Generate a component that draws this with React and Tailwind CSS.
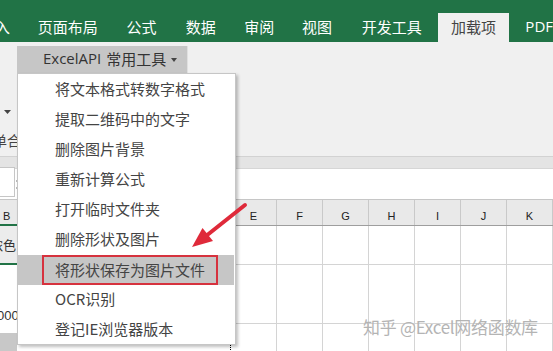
import React from "react";

const CJK = { fontFamily: '"Noto Sans CJK SC", "Noto Sans", sans-serif' };

const tabs = [
  { t: "页面布局", w: "w-[88px]" },
  { t: "公式", w: "w-[60px]" },
  { t: "数据", w: "w-[59px]" },
  { t: "审阅", w: "w-[58px]" },
  { t: "视图", w: "w-[58px]" },
  { t: "开发工具", w: "w-[92px]" },
];

const items = [
  "将文本格式转数字格式",
  "提取二维码中的文字",
  "删除图片背景",
  "重新计算公式",
  "打开临时文件夹",
  "删除形状及图片",
  "将形状保存为图片文件",
  "OCR识别",
  "登记IE浏览器版本",
];

const cols = ["E", "F", "G", "H", "I", "J", "K"];

export default function App() {
  return (
    <div
      className="relative w-[553px] h-[351px] overflow-hidden bg-white"
      style={CJK}
    >
      {/* Tab bar */}
      <div className="h-[42px] bg-[#217346] flex items-end text-[15px] text-white">
        <div className="w-[24px] h-[29px] flex items-center pb-[2px] overflow-hidden">
          <span className="-ml-[5px] leading-none">入</span>
        </div>
        {tabs.map((x) => (
          <div
            key={x.t}
            className={`${x.w} h-[29px] flex items-center justify-center pb-[2px] leading-none`}
          >
            {x.t}
          </div>
        ))}
        <div className="w-[72px] h-[29px] bg-[#f0f0f0] text-[#444] flex items-center justify-center pb-[2px] leading-none">
          加载项
        </div>
        <div className="h-[29px] flex items-center pl-[16px] pb-[2px] leading-none" style={{ fontFamily: '"Open Sans", sans-serif' }}>
          PDF
        </div>
      </div>

      {/* Ribbon */}
      <div className="h-[115px] bg-[#f0f0f0] border-b border-[#d2d2d2] flex">
        <div className="w-[17px] overflow-hidden flex flex-col">
          <div className="mt-[65px] h-[10px] flex items-center pl-[4px]">
            <svg width="7" height="4" viewBox="0 0 7 4">
              <path d="M0 0 L7 0 L3.5 4 Z" fill="#444" />
            </svg>
          </div>
          <div className="mt-[13px] h-[20px] flex items-center text-[14px] text-[#444] whitespace-nowrap">
            <span className="-ml-[7px] leading-none">单合</span>
          </div>
        </div>
        <div className="mt-[4px] h-[27px] w-[171px] bg-[#c6c6c6] flex items-center pl-[26px] pb-[2px] text-[15px] text-[#333] border-r border-[#e0e0e0] whitespace-nowrap">
          <span className="leading-none" style={{ fontFamily: '"Open Sans", "Noto Sans CJK SC", sans-serif' }}>
            ExcelAPI
          </span>
          <span className="leading-none ml-[5px]">常用工具</span>
          <svg className="ml-[5px] mt-[2px]" width="6" height="4" viewBox="0 0 6 4">
            <path d="M0 0 L6 0 L3 4 Z" fill="#444" />
          </svg>
        </div>
      </div>

      {/* band */}
      <div className="h-[12px] bg-[#e4e4e4] border-b border-[#d6d6d6]" />

      {/* formula bar */}
      <div className="h-[31px] bg-white border-b border-[#c6c6c6] flex">
        <div className="w-[15px] h-full border border-[#c6c6c6] border-l-0 -mt-[2px] bg-white" />
        <div className="w-[3px] flex flex-col items-center justify-center gap-[5px]">
          <div className="w-[2px] h-[2px] bg-[#bbb]" />
          <div className="w-[2px] h-[2px] bg-[#bbb]" />
        </div>
      </div>

      {/* column header */}
      <div className="h-[26px] flex bg-[#e9e9e9] border-b border-[#9e9e9e]" style={{ fontFamily: '"Liberation Sans", Arial, sans-serif' }}>
        <div className="w-[237px] relative flex items-end pb-[3px] pl-[3px] text-[11px] text-[#222]">
          <span className="leading-none">B</span>
          <div className="absolute left-0 bottom-[-1px] w-[60px] h-[2px] bg-[#217346]" />
        </div>
        {cols.map((c) => (
          <div
            key={c}
            className="w-[46px] shrink-0 border-r border-[#c9c9c9] flex items-end justify-center pb-[3px] text-[11px] text-[#222]"
          >
            <span className="leading-none">{c}</span>
          </div>
        ))}
      </div>

      {/* grid body */}
      <div className="flex">
        <div className="w-[236px] flex flex-col">
          <div className="h-[39px] w-[60px] bg-[#ececec] border-b-2 border-[#217346] flex items-center text-[13px] text-[#333] whitespace-nowrap overflow-hidden">
            <span className="-ml-[10px] leading-none">浓色</span>
          </div>
          <div className="h-[59px] flex items-end pb-[2px] text-[13px] text-[#333]" style={{ fontFamily: '"Liberation Sans", Arial, sans-serif' }}>
            <span className="-ml-[3px] leading-none">000</span>
          </div>
          <div className="h-[30px] pt-[9px]">
            <div className="w-[17px] h-full bg-[#c8c8c8]" />
          </div>
        </div>
        <div className="w-px border-l border-dotted border-black" />
        <div className="flex flex-col">
          {[39, 59, 40].map((h, r) => (
            <div key={r} className="flex" style={{ height: h }}>
              {cols.map((c) => (
                <div
                  key={c}
                  className="w-[46px] shrink-0 border-r border-b border-[#d4d4d4]"
                />
              ))}
            </div>
          ))}
        </div>
      </div>

      {/* dropdown menu */}
      <div className="absolute left-[17px] top-[73px] w-[219px] h-[272px] bg-white border border-[#c6c6c6] shadow-[2px_2px_3px_rgba(0,0,0,0.25)] pt-[1px] text-[15px] text-[#444]">
        {items.map((t, i) =>
          i === 6 ? (
            <div key={t} className="h-[30px] mr-[1px] bg-[#c6c6c6] flex">
              <div className="ml-[24px] w-[176px] h-full border-2 border-[#d6323e] flex items-center pl-[11px] pb-[2px] whitespace-nowrap">
                <span className="leading-none">{t}</span>
              </div>
            </div>
          ) : (
            <div
              key={t}
              className="h-[30px] flex items-center pl-[37px] pb-[3px] whitespace-nowrap"
            >
              <span className="leading-none">{t}</span>
            </div>
          )
        )}
      </div>

      {/* red arrow */}
      <svg
        className="absolute left-0 top-0 pointer-events-none"
        width="553"
        height="351"
        viewBox="0 0 553 351"
      >
        <line
          x1="245"
          y1="205"
          x2="206"
          y2="236"
          stroke="#df2a3a"
          strokeWidth="4"
          strokeLinecap="round"
        />
        <polygon points="192,247 202.5,228 213,241" fill="#df2a3a" />
      </svg>

      {/* watermark */}
      <div className="absolute left-[363px] top-[318px] text-[17px] text-[#b4b4b4] whitespace-nowrap leading-none tracking-[-0.3px]">
        知乎 @Excel网络函数库
      </div>
    </div>
  );
}
